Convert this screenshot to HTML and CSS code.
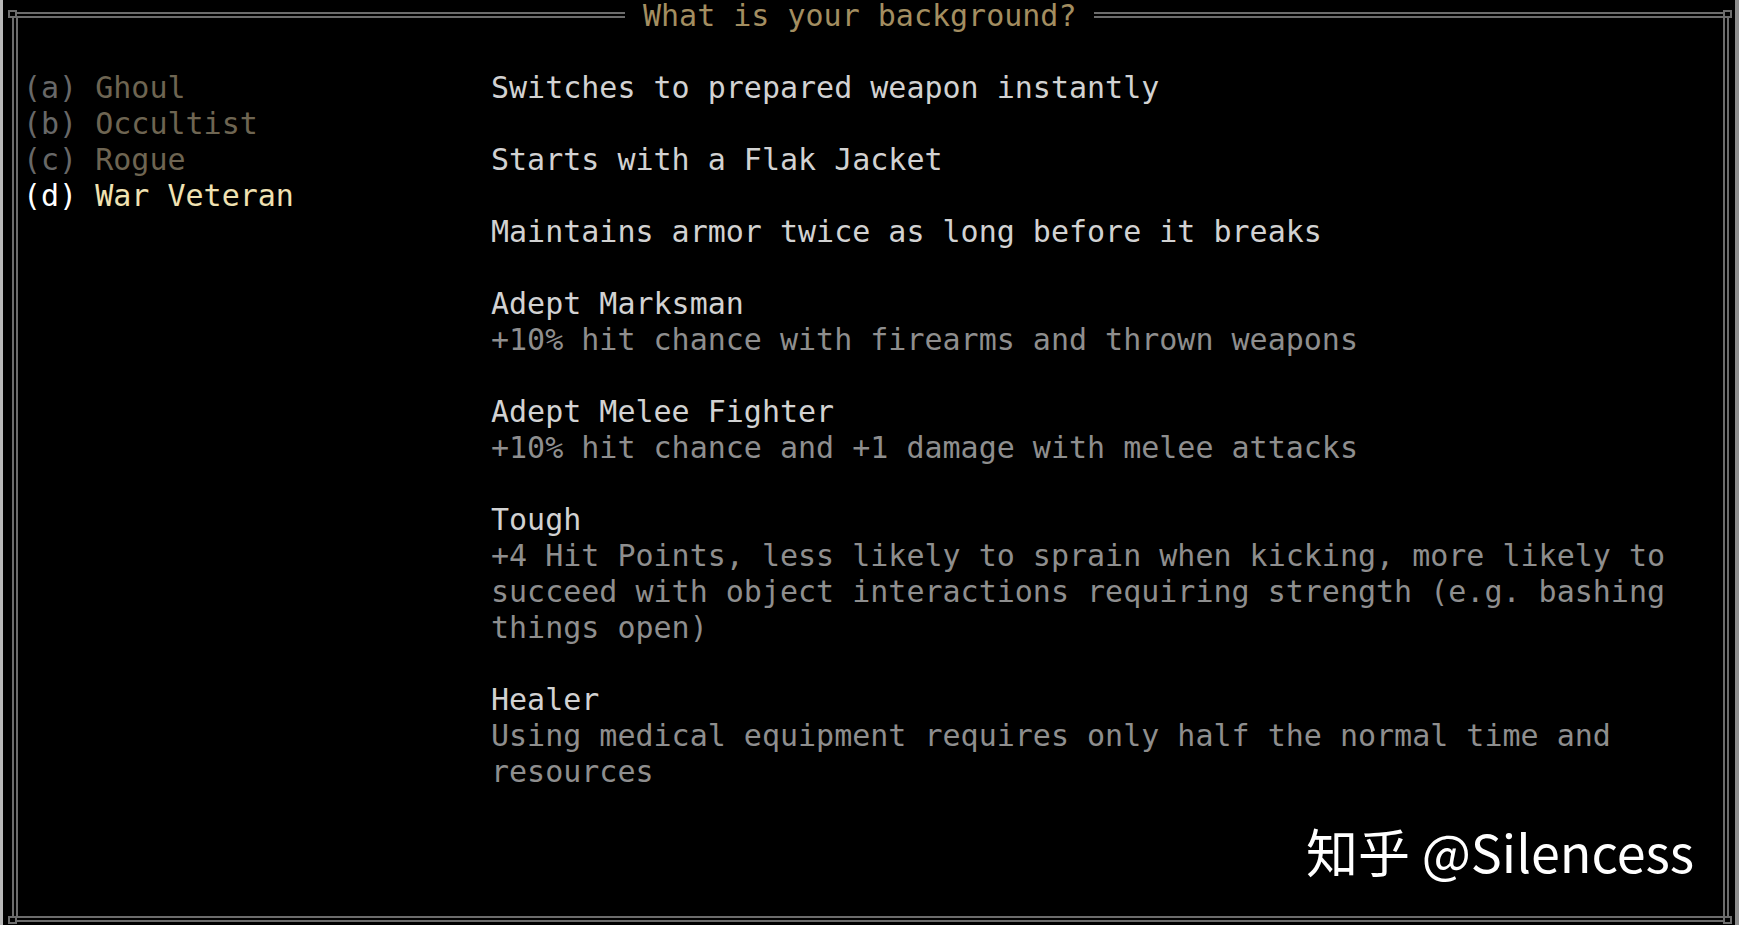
FILE: index.html
```html
<!DOCTYPE html>
<html lang="en">
<head>
<meta charset="utf-8">
<title>What is your background?</title>
<link rel="stylesheet" href="styles.css">
</head>
<body>
<div class="screen">
  <div class="frame">
    <span class="corner tl"></span>
    <span class="corner tr"></span>
    <span class="corner bl"></span>
    <span class="corner br"></span>
    <h1 class="title">What is your background?</h1>
    <div class="columns">
      <ul class="options">
        <li class="option"><span class="key">(a)</span> <span class="name">Ghoul</span></li>
        <li class="option"><span class="key">(b)</span> <span class="name">Occultist</span></li>
        <li class="option"><span class="key">(c)</span> <span class="name">Rogue</span></li>
        <li class="option selected"><span class="key">(d)</span> <span class="name">War Veteran</span></li>
      </ul>
      <div class="details">
        <div class="perk"><div class="perk-name">Switches to prepared weapon instantly</div></div>
        <div class="perk"><div class="perk-name">Starts with a Flak Jacket</div></div>
        <div class="perk"><div class="perk-name">Maintains armor twice as long before it breaks</div></div>
        <div class="perk">
          <div class="perk-name">Adept Marksman</div>
          <div class="perk-desc">+10% hit chance with firearms and thrown weapons</div>
        </div>
        <div class="perk">
          <div class="perk-name">Adept Melee Fighter</div>
          <div class="perk-desc">+10% hit chance and +1 damage with melee attacks</div>
        </div>
        <div class="perk">
          <div class="perk-name">Tough</div>
          <div class="perk-desc">+4 Hit Points, less likely to sprain when kicking, more likely to succeed with object interactions requiring strength (e.g. bashing things open)</div>
        </div>
        <div class="perk">
          <div class="perk-name">Healer</div>
          <div class="perk-desc">Using medical equipment requires only half the normal time and resources</div>
        </div>
      </div>
    </div>
  </div>
  <div class="watermark">知乎 @Silencess</div>
</div>
</body>
</html>
```
FILE: styles.css
```css
html, body {
  margin: 0;
  padding: 0;
  background: #000;
}

body {
  width: 1739px;
  height: 925px;
  overflow: hidden;
}

.screen {
  position: relative;
  box-sizing: border-box;
  width: 1739px;
  height: 925px;
  padding: 12px 0 0 9px;
  border-left: 3px solid #b9b9b9;
  border-right: 4px solid #8c8c8c;
  background: #000;
  font-family: "DejaVu Sans Mono", "Liberation Mono", monospace;
  font-size: 30px;
  line-height: 36px;
}

.frame {
  position: relative;
  box-sizing: border-box;
  width: 1717px;
  height: 910px;
  border: 6px double #6c6c6c;
  padding: 52px 0 0 5px;
}

.corner {
  position: absolute;
  box-sizing: border-box;
  width: 9px;
  height: 8px;
  border: 2px solid #6c6c6c;
  background: #000;
}
.corner.tl { left: -10px; top: -8px; }
.corner.tr { right: -9px; top: -8px; }
.corner.bl { left: -10px; bottom: -8px; }
.corner.br { right: -9px; bottom: -8px; }

.title {
  position: absolute;
  left: 607px;
  top: -20px;
  margin: 0;
  padding: 0 18px;
  background: #000;
  color: #a38e60;
  font-size: 30px;
  font-weight: normal;
  line-height: 36px;
  white-space: pre;
}

.columns {
  display: grid;
  grid-template-columns: 468px 1fr;
  align-items: start;
}

.options {
  list-style: none;
  margin: 0;
  padding: 0;
}

.option { white-space: pre; }
.option .key { color: #686868; }
.option .name { color: #6e6552; }
.option.selected .key { color: #ffffff; }
.option.selected .name { color: #f0e2b2; }

.details {
  display: flex;
  flex-direction: column;
  gap: 36px;
  max-width: 1230px;
}

.perk-name { color: #d2d2d2; }
.perk-desc { color: #8e8e8e; }

.watermark {
  position: absolute;
  left: 1303px;
  top: 825px;
  color: #ffffff;
  font-family: "Noto Sans CJK SC", "Noto Sans", sans-serif;
  font-size: 52px;
  line-height: 1;
  white-space: pre;
}
```
